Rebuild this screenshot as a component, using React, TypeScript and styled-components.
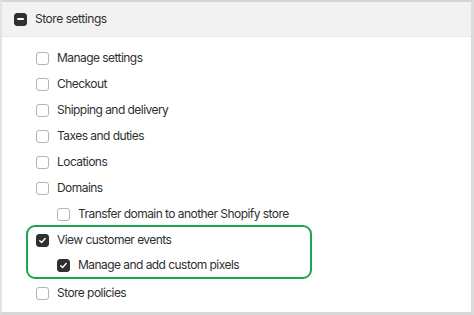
import React from "react";
import styled, { createGlobalStyle } from "styled-components";

interface Item {
  label: string;
  checked?: boolean;
  nested?: boolean;
}

const before: Item[] = [
  { label: "Manage settings" },
  { label: "Checkout" },
  { label: "Shipping and delivery" },
  { label: "Taxes and duties" },
  { label: "Locations" },
  { label: "Domains" },
  { label: "Transfer domain to another Shopify store", nested: true },
];

const highlighted: Item[] = [
  { label: "View customer events", checked: true },
  { label: "Manage and add custom pixels", checked: true, nested: true },
];

const after: Item[] = [{ label: "Store policies" }];

function Check({ checked, minus }: { checked?: boolean; minus?: boolean }) {
  return (
    <Box $on={checked || minus}>
      {checked && (
        <svg width="9" height="9" viewBox="0 0 10 10">
          <path d="M2 5.2l2 2 4-4.4" fill="none" stroke="#fff" strokeWidth="1.6" strokeLinecap="round" strokeLinejoin="round" />
        </svg>
      )}
      {minus && <Dash />}
    </Box>
  );
}

function Row({ item }: { item: Item }) {
  return (
    <RowWrap $nested={item.nested}>
      <Check checked={item.checked} />
      <Label>{item.label}</Label>
    </RowWrap>
  );
}

export default function App() {
  return (
    <>
      <GlobalStyle />
      <Frame>
        <Header>
          <Check minus />
          <HeaderLabel>Store settings</HeaderLabel>
        </Header>
        <List>
          {before.map((item) => (
            <Row key={item.label} item={item} />
          ))}
          <Highlight>
            {highlighted.map((item) => (
              <Row key={item.label} item={item} />
            ))}
          </Highlight>
          {after.map((item) => (
            <Row key={item.label} item={item} />
          ))}
        </List>
      </Frame>
    </>
  );
}

const GlobalStyle = createGlobalStyle`
  body {
    margin: 0;
    background: #fff;
    font-family: Inter, "Noto Sans", sans-serif;
  }
`;

const Frame = styled.div`
  box-sizing: border-box;
  width: 474px;
  height: 315px;
  border-top: 2px solid #d6d6d6;
  border-left: 2px solid #e4e4e4;
  border-right: 3px solid #dcdcdc;
  border-bottom: 3px solid #d8d8d8;
  overflow: hidden;
  background: #fff;
`;

const Header = styled.div`
  box-sizing: border-box;
  height: 35px;
  display: flex;
  align-items: center;
  gap: 8px;
  padding: 0 0 0 12px;
  background: #f2f2f2;
  border-bottom: 1px solid #e8e8e8;
`;

const HeaderLabel = styled.span`
  font-size: 12px;
  letter-spacing: -0.45px;
  color: #303030;
  line-height: 1;
`;

const List = styled.div`
  padding: 8px 0 0 24px;
`;

const RowWrap = styled.div<{ $nested?: boolean }>`
  height: 26px;
  display: flex;
  align-items: center;
  gap: 8px;
  padding-left: ${(p) => (p.$nested ? 31 : 10)}px;
`;

const Highlight = styled.div`
  width: 286px;
  box-sizing: border-box;
  margin: -2px 0 1px;
  border: 2px solid #1ea34f;
  border-radius: 9px;

  ${RowWrap} {
    padding-left: 8px;
  }
  ${RowWrap}:nth-child(2) {
    height: 24px;
    padding-left: 29px;
  }
`;

const Box = styled.span<{ $on?: boolean }>`
  box-sizing: border-box;
  width: 13px;
  height: 13px;
  flex: none;
  border-radius: 3px;
  display: flex;
  align-items: center;
  justify-content: center;
  background: ${(p) => (p.$on ? "#303030" : "#fff")};
  border: 1px solid ${(p) => (p.$on ? "#303030" : "#b4b4b4")};
`;

const Dash = styled.span`
  width: 7px;
  height: 1.5px;
  background: #fff;
  border-radius: 1px;
`;

const Label = styled.span`
  font-size: 12px;
  letter-spacing: -0.55px;
  color: #303030;
  line-height: 1;
`;
